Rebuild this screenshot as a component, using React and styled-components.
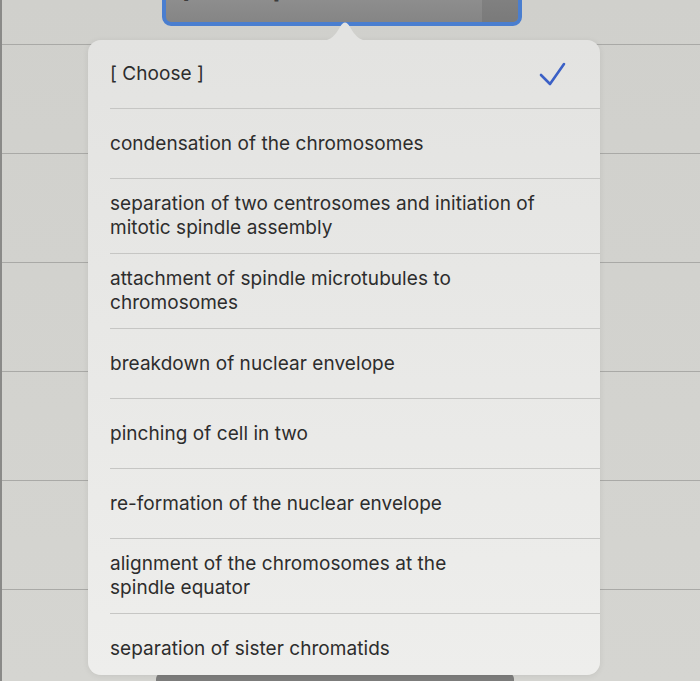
import React from 'react';
import styled, { createGlobalStyle } from 'styled-components';

const GlobalStyle = createGlobalStyle`
  html, body {
    margin: 0;
    padding: 0;
  }
  body {
    background: #d2d2ce;
    font-family: Inter, "Liberation Sans", Arial, sans-serif;
  }
`

const OPTIONS = [
  ['condensation of the chromosomes'],
  ['separation of two centrosomes and initiation of', 'mitotic spindle assembly'],
  ['attachment of spindle microtubules to', 'chromosomes'],
  ['breakdown of nuclear envelope'],
  ['pinching of cell in two'],
  ['re-formation of the nuclear envelope'],
  ['alignment of the chromosomes at the', 'spindle equator'],
  ['separation of sister chromatids'],
];

const Page = styled.div`
  position: relative;
  width: 700px;
  height: 681px;
  overflow: hidden;
  box-sizing: border-box;
  border-left: 2px solid #8a8a88;
  background: linear-gradient(to bottom, #d0d0cc 0%, #d3d3cf 60%, #d5d5d1 100%);
`

const TopRow = styled.div`
  height: 45px;
  box-sizing: border-box;
  display: flex;
  align-items: flex-end;
  padding: 0 0 18px 160px;
  border-bottom: 1px solid #a9a9a6;
  overflow: hidden;
`

const Row = styled.div`
  height: 109px;
  box-sizing: border-box;
  display: flex;
  align-items: flex-start;
  padding-left: 154px;
  border-bottom: 1px solid #a9a9a6;
`

const Field = styled.div`
  flex: none;
  display: flex;
  width: 360px;
  height: 50px;
  box-sizing: border-box;
  border: 4px solid #4a7ecf;
  border-radius: 9px;
  background: linear-gradient(to bottom, #959595, #858585);
  overflow: hidden;
`

const FieldText = styled.div`
  flex: 1;
  padding: 2px 0 0 16px;
  font-size: 20px;
  line-height: 20px;
  color: #3c3c3c;
`

const FieldCap = styled.div`
  width: 36px;
  background: linear-gradient(to bottom, #868686, #7a7a7a);
`

const PlainField = styled.div`
  width: 358px;
  height: 30px;
  margin-top: 83px;
  border-radius: 6px;
  background: #7d7d7c;
`

const Popover = styled.div`
  position: absolute;
  left: 86px;
  top: 40px;
  width: 512px;
  height: 635px;
`

const Arrow = styled.svg`
  position: absolute;
  left: 233px;
  top: -21px;
  width: 48px;
  height: 22px;
`

const List = styled.div`
  height: 100%;
  border-radius: 13px;
  overflow: hidden;
  background: linear-gradient(to bottom, #e3e3e1 0%, #e8e8e6 45%, #eeeeec 100%);
  box-shadow: 0 1px 6px rgba(0, 0, 0, 0.08);
`

const Option = styled.div`
  display: flex;
  align-items: center;
  justify-content: space-between;
  min-height: ${props => props.$head ? 69 : 70}px;
  box-sizing: border-box;
  margin-left: 22px;
  padding: 13px ${props => props.$head ? 34 : 22}px 13px 0;
  border-bottom: ${props => props.$last ? 'none' : '1px solid #c6c6c4'};
`

const Label = styled.div`
  font-size: 19px;
  line-height: 24px;
  color: #2d2d2d;
  letter-spacing: 0.05px;
  white-space: nowrap;
`

const Check = () => (
  <svg width="27" height="24" viewBox="0 0 27 24">
    <polyline
      points="2,13 11,22 25,2"
      fill="none"
      stroke="#3b60c6"
      strokeWidth="2.6"
      strokeLinecap="round"
      strokeLinejoin="round"
    />
  </svg>
);

const App = () => (
  <>
    <GlobalStyle />
    <Page>
      <TopRow>
        <Field>
          <FieldText>[ Choose ]</FieldText>
          <FieldCap />
        </Field>
      </TopRow>
      <Row />
      <Row />
      <Row />
      <Row />
      <Row />
      <Row>
        <PlainField />
      </Row>

      <Popover>
        <Arrow viewBox="0 0 48 22">
          <path
            d="M0 22 C10 22 15 15 19 8 Q24 -1 29 8 C33 15 38 22 48 22 Z"
            fill="#e3e3e1"
          />
        </Arrow>
        <List>
          <Option $head>
            <Label>[ Choose ]</Label>
            <Check />
          </Option>
          {OPTIONS.map((lines, i) => (
            <Option key={i} $last={i === OPTIONS.length - 1}>
              <Label>
                {lines.map((line, j) => (
                  <div key={j}>{line}</div>
                ))}
              </Label>
            </Option>
          ))}
        </List>
      </Popover>
    </Page>
  </>
);

export default App;
